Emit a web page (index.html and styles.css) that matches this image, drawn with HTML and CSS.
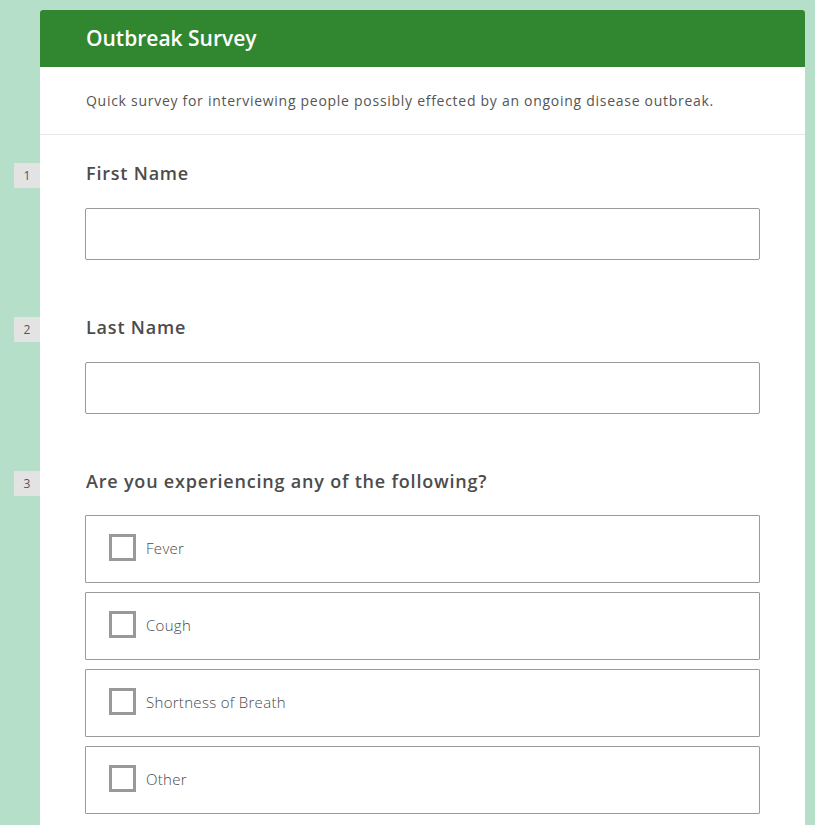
FILE: index.html
```html
<!doctype html>
<html lang="en">
<head>
	<meta charset="UTF-8">
	<title>Outbreak Survey</title>
	<link rel="stylesheet" href="styles.css">
</head>
<body>
	<div class="page">
		<div class="card">
			<div class="card-head">Outbreak Survey</div>
			<div class="card-desc">Quick survey for interviewing people possibly effected by an ongoing disease outbreak.</div>

			<div class="question">
				<span class="num">1</span>
				<div class="q-label">First Name</div>
				<input type="text" class="q-input">
			</div>
			<div class="question">
				<span class="num">2</span>
				<div class="q-label">Last Name</div>
				<input type="text" class="q-input">
			</div>
			<div class="question">
				<span class="num">3</span>
				<div class="q-label">Are you experiencing any of the following?</div>
				<div class="choices">
					<label class="choice"><span class="box"></span>Fever</label>
					<label class="choice"><span class="box"></span>Cough</label>
					<label class="choice"><span class="box"></span>Shortness of Breath</label>
					<label class="choice"><span class="box"></span>Other</label>
				</div>
			</div>
		</div>
	</div>
</body>
</html>
```

FILE: styles.css
```css
body,html{
	width: 100%;
	height: 100%;
}
body{
	margin: 0;
	background: #b6dfca;
	overflow: hidden;
}
*{
	font-family: "Open Sans", "Noto Sans", sans-serif;
	box-sizing: border-box;
}
.page{
	padding: 10px 10px 0 40px;
}
.card{
	width: 765px;
	background: #fff;
	border-radius: 3px 3px 0 0;
	min-height: 900px;
}
.card-head{
	height: 57px;
	line-height: 56px;
	padding: 0 45px 0 46px;
	background: #318630;
	color: #fff;
	font-size: 21px;
	font-weight: 600;
	border-radius: 3px 3px 0 0;
}
.card-desc{
	padding: 22px 45px 22px 46px;
	line-height: 23px;
	font-size: 14px;
	color: #555;
	letter-spacing: 0.72px;
	border-bottom: 1px solid #e6e6e6;
}
.question{
	position: relative;
	padding: 28px 45px 29px 45px;
}
.num{
	position: absolute;
	left: -26px;
	top: 28px;
	width: 26px;
	height: 25px;
	line-height: 25px;
	text-align: center;
	background: #e3e3e3;
	color: #555;
	font-size: 12px;
}
.q-label{
	height: 24px;
	line-height: 20px;
	padding-left: 1px;
	font-size: 18px;
	font-weight: 600;
	color: #4c4c4c;
	letter-spacing: 0.8px;
	margin-bottom: 21px;
}
.choices{
	display: flex;
	flex-direction: column;
	gap: 9px;
	margin-top: -1px;
}
.q-input{
	display: block;
	width: 100%;
	height: 52px;
	border: 1px solid #9a9a9a;
	border-radius: 2px;
	background: #fff;
	margin: 0;
}
.choice{
	display: flex;
	align-items: center;
	height: 68px;
	padding-left: 23px;
	padding-bottom: 3px;
	border: 1px solid #9a9a9a;
	border-radius: 1px;
	font-size: 15px;
	font-weight: 300;
	letter-spacing: 0.3px;
	color: #4a4a4a;
}
.box{
	width: 27px;
	height: 27px;
	border: 3px solid #999;
	margin-right: 10px;
}
```
